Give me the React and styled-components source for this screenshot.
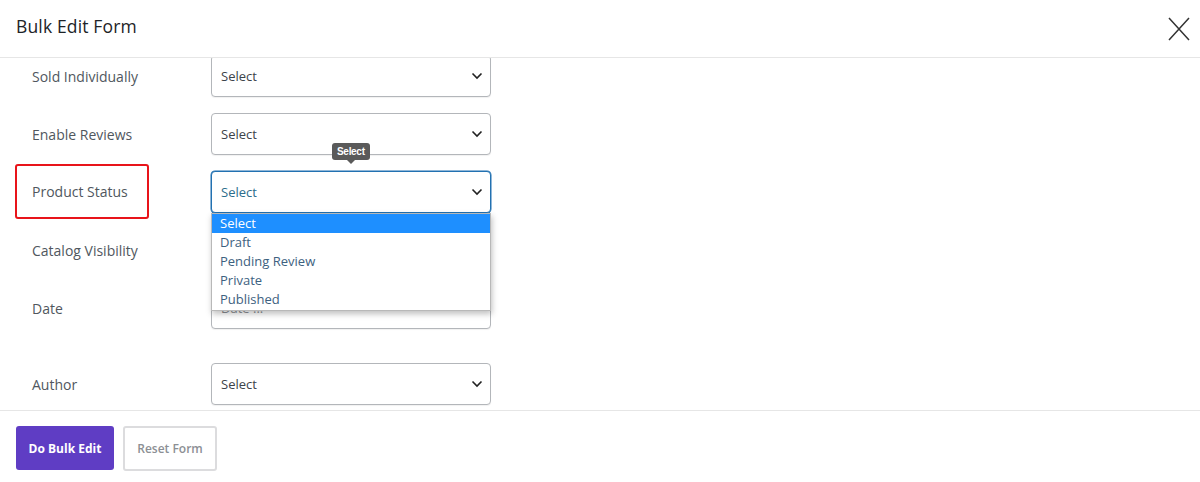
import styled, { createGlobalStyle } from "styled-components";

const GlobalStyle = createGlobalStyle`
  html, body {
    margin: 0;
    padding: 0;
    background: #fff;
    font-family: "Open Sans", "Noto Sans", sans-serif;
  }
`;

const rows = [
  { label: "Sold Individually", kind: "select" },
  { label: "Enable Reviews", kind: "select" },
  { label: "Product Status", kind: "select", open: true, marked: true },
  { label: "Catalog Visibility", kind: "select" },
  { label: "Date", kind: "date" },
  { label: "Author", kind: "select" },
];

const options = ["Select", "Draft", "Pending Review", "Private", "Published"];

const Chevron = () => (
  <svg width="12" height="8" viewBox="0 0 12 8">
    <path d="M1.5 1.5 L6 6 L10.5 1.5" fill="none" stroke="#222" strokeWidth="1.6" />
  </svg>
);

const App = () => {
  return (
    <Modal>
      <GlobalStyle />
      <Header>
        <Title>Bulk Edit Form</Title>
        <CloseButton aria-label="close">
          <svg width="22" height="24" viewBox="0 0 22 24">
            <path d="M1 1 L21 23 M21 1 L1 23" stroke="#333" strokeWidth="1.5" />
          </svg>
        </CloseButton>
      </Header>
      <Body>
        <List>
          {rows.map((row) => (
            <Row key={row.label} $extra={row.kind === "date"}>
              <Label $marked={row.marked}>{row.label}</Label>
              <Field>
                {row.kind === "date" ? (
                  <Box>
                    <Placeholder>Date ...</Placeholder>
                  </Box>
                ) : (
                  <Box $focused={row.open}>
                    <Value $focused={row.open}>Select</Value>
                    <Chevron />
                  </Box>
                )}
                {row.open && (
                  <>
                    <Tip>Select</Tip>
                    <Dropdown>
                      {options.map((opt, i) => (
                        <Option key={opt} $active={i === 0}>
                          {opt}
                        </Option>
                      ))}
                    </Dropdown>
                  </>
                )}
              </Field>
            </Row>
          ))}
        </List>
      </Body>
      <Footer>
        <PrimaryButton>Do Bulk Edit</PrimaryButton>
        <SecondaryButton>Reset Form</SecondaryButton>
      </Footer>
    </Modal>
  );
};

export default App;

const Modal = styled.div`
  width: 1200px;
  height: 482px;
  display: flex;
  flex-direction: column;
  background: #fff;
  overflow: hidden;
`;

const Header = styled.div`
  height: 58px;
  box-sizing: border-box;
  flex: none;
  display: flex;
  align-items: center;
  justify-content: space-between;
  padding: 0 10px 6px 16px;
  border-bottom: 1px solid #e6e6e6;
  position: relative;
  z-index: 2;
  background: #fff;
`;

const Title = styled.h1`
  margin: 0;
  font-size: 17.5px;
  font-weight: 500;
  color: #1d2327;
  letter-spacing: 0.15px;
`;

const CloseButton = styled.button`
  border: 0;
  background: none;
  padding: 0;
  margin-top: 6px;
  display: flex;
  cursor: pointer;
`;

const Body = styled.div`
  height: 352px;
  flex: none;
  overflow: hidden;
  border-bottom: 1px solid #e6e6e6;
`;

const List = styled.div`
  margin-top: -3px;
  display: flex;
  flex-direction: column;
  gap: 16px;
`;

const Row = styled.div`
  display: flex;
  align-items: center;
  margin-bottom: ${(p) => (p.$extra ? "18px" : "0")};
`;

const Label = styled.div`
  flex: none;
  box-sizing: border-box;
  margin-left: ${(p) => (p.$marked ? "15px" : "16px")};
  width: ${(p) => (p.$marked ? "134px" : "195px")};
  margin-right: ${(p) => (p.$marked ? "62px" : "0")};
  padding-left: ${(p) => (p.$marked ? "15px" : "16px")};
  height: ${(p) => (p.$marked ? "55px" : "auto")};
  margin-top: ${(p) => (p.$marked ? "-7px" : "0")};
  margin-bottom: ${(p) => (p.$marked ? "-6px" : "0")};
  display: flex;
  align-items: center;
  font-size: 14px;
  color: #50575e;
  border: ${(p) => (p.$marked ? "2px solid #e8141a" : "0")};
  border-radius: 3px;
`;

const Field = styled.div`
  position: relative;
  width: 280px;
`;

const Box = styled.div`
  height: 42px;
  box-sizing: border-box;
  display: flex;
  align-items: center;
  justify-content: space-between;
  padding: 0 7px 0 9px;
  border: 1px solid ${(p) => (p.$focused ? "#2271b1" : "#b3b6ba")};
  border-radius: 4px;
  box-shadow: ${(p) => (p.$focused ? "0 0 0 0.5px #2271b1" : "0 1px 1px rgba(0,0,0,0.06)")};
  background: #fff;
`;

const Value = styled.span`
  font-size: 13px;
  color: ${(p) => (p.$focused ? "#2c6d8c" : "#3c434a")};
`;

const Placeholder = styled.span`
  font-size: 13px;
  color: #8c8f94;
`;

const Tip = styled.div`
  position: absolute;
  left: 121px;
  top: -28px;
  padding: 0 5px;
  height: 17px;
  line-height: 17px;
  background: #5a5a5a;
  color: #fff;
  border-radius: 3px;
  font-family: "Liberation Sans", Arial, sans-serif;
  font-size: 10px;
  font-weight: bold;
  letter-spacing: -0.3px;

  &::after {
    content: "";
    position: absolute;
    left: 50%;
    bottom: -4px;
    margin-left: -4px;
    border-left: 4px solid transparent;
    border-right: 4px solid transparent;
    border-top: 4px solid #5a5a5a;
  }
`;

const Dropdown = styled.div`
  position: absolute;
  left: 0;
  top: 42px;
  width: 280px;
  box-sizing: border-box;
  padding-bottom: 1px;
  background: #fff;
  border: 1px solid #b8b8b8;
  box-shadow: 1px 3px 6px rgba(0, 0, 0, 0.25);
  z-index: 3;
`;

const Option = styled.div`
  height: 19px;
  line-height: 19px;
  padding: 0 8px;
  font-size: 13px;
  color: ${(p) => (p.$active ? "#fff" : "#3d6180")};
  background: ${(p) => (p.$active ? "#1e8fff" : "transparent")};
`;

const Footer = styled.div`
  flex: 1;
  display: flex;
  align-items: flex-start;
  gap: 9px;
  padding: 15px 16px;
`;

const PrimaryButton = styled.button`
  height: 44px;
  width: 98px;
  border: 0;
  border-radius: 3px;
  background: #5f3dc4;
  color: #fff;
  font-family: "Open Sans", sans-serif;
  font-size: 12px;
  font-weight: 700;
  cursor: pointer;
`;

const SecondaryButton = styled.button`
  height: 45px;
  width: 94px;
  border: 2px solid #dcdcde;
  border-radius: 3px;
  background: #fff;
  color: #8c8f94;
  font-family: "Open Sans", sans-serif;
  font-size: 12px;
  font-weight: 600;
  cursor: pointer;
`;
